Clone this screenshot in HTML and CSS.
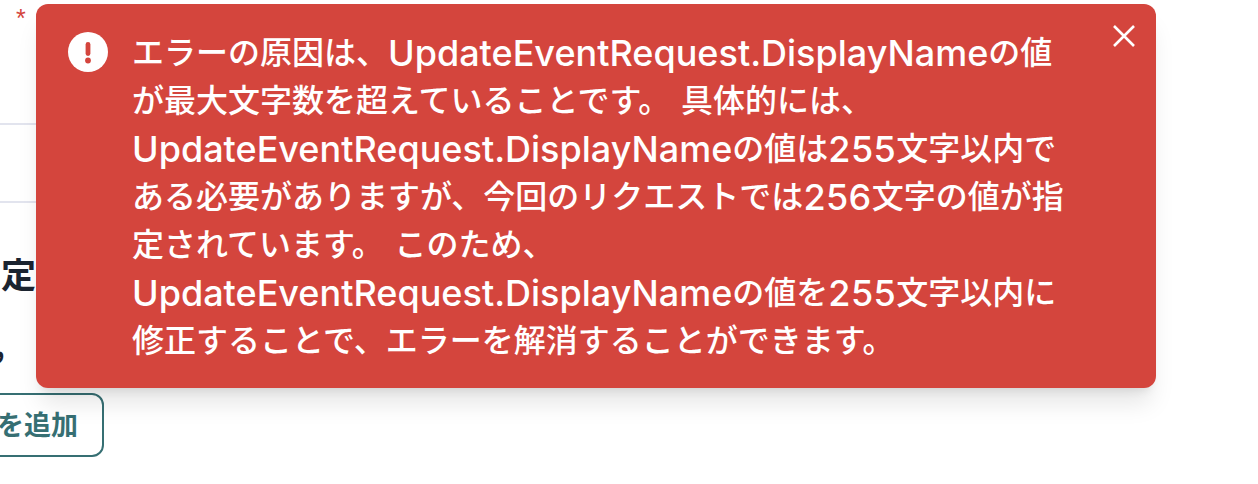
FILE: index.html
```html
<!DOCTYPE html>
<html lang="ja">
<head>
<meta charset="utf-8">
<title>エラー</title>
<link rel="stylesheet" href="styles.css">
</head>
<body>
<div class="form">
  <div class="field-row">
    <span class="required">*</span>
  </div>
  <div class="field-row second"></div>
  <section class="settings">
    <h2 class="heading">定</h2>
    <p class="note">,</p>
  </section>
</div>
<button class="add" type="button">を追加</button>
<div class="toast" role="alert">
  <svg class="alert-icon" viewBox="0 0 40 40" aria-hidden="true">
    <circle cx="20" cy="20" r="20" fill="#fff"/>
    <rect x="17.6" y="10" width="4.8" height="14" rx="2.4" fill="#d4453d"/>
    <circle cx="20" cy="28.5" r="2.9" fill="#d4453d"/>
  </svg>
  <p class="message">エラーの原因は、<span class="latin">UpdateEventRequest.DisplayName</span>の値が最大文字数を超えていることです。 具体的には、<span class="latin">UpdateEventRequest.DisplayName</span>の値は<span class="num">255</span>文字以内である必要がありますが、今回のリクエストでは<span class="num">256</span>文字の値が指定されています。 このため、<span class="latin">UpdateEventRequest.DisplayName</span>の値を<span class="num">255</span>文字以内に修正することで、エラーを解消することができます。</p>
  <svg class="close-icon" viewBox="0 0 22 22" aria-hidden="true">
    <path d="M1 1L21 21M21 1L1 21" stroke="#fff" stroke-width="2.6" fill="none"/>
  </svg>
</div>
</body>
</html>
```
FILE: styles.css
```css
* { box-sizing: border-box; }
html, body { margin: 0; height: 100%; background: #fff; overflow: hidden; }
body { position: relative; width: 1258px; height: 484px; font-family: "Noto Sans CJK JP", sans-serif; }
.form { width: 36px; overflow: hidden; height: 484px; }
.field-row { height: 125px; border-bottom: 2px solid #e2e4ee; position: relative; }
.field-row.second { height: 78px; }
.required { position: absolute; left: 16px; top: 3px; color: #d4453d; font: 400 25px/30px "Liberation Sans", sans-serif; }
.settings { width: 110px; }
.heading { margin: 46px 0 0 1px; font-size: 35px; line-height: 48px; font-weight: 700; color: #1b2430; }
.note { margin: 23px 0 0 -5px; font-size: 30px; line-height: 48px; font-weight: 700; color: #1b2430; }
.toast { position: absolute; left: 36px; top: 4px; width: 1120px; height: 384px; background: #d4453d; border-radius: 12px; box-shadow: 0 20px 25px -5px rgba(0,0,0,.1), 0 8px 10px -6px rgba(0,0,0,.1); display: flex; align-items: flex-start; padding: 22px 32px; color: #fff; }
.alert-icon { width: 40px; height: 40px; flex: none; margin-top: 6px; }
.message { margin: 0 0 0 24px; width: 940px; font-size: 32px; line-height: 48px; font-weight: 500; word-spacing: 3.5px; }
.latin, .num { font-family: Inter, sans-serif; font-size: 36px; font-weight: 500; line-height: 0; vertical-align: -1.5px; }
.num { letter-spacing: .4px; }
.close-icon { position: absolute; right: 21px; top: 21px; width: 22px; height: 22px; }
.add { position: absolute; left: -100px; top: 393px; width: 204px; height: 64px; border: 2px solid #366f73; border-radius: 12px; background: #fff; color: #366f73; font: 700 27px/1 "Noto Sans CJK JP", sans-serif; text-align: right; padding: 0 24px 4px 0; }
```
